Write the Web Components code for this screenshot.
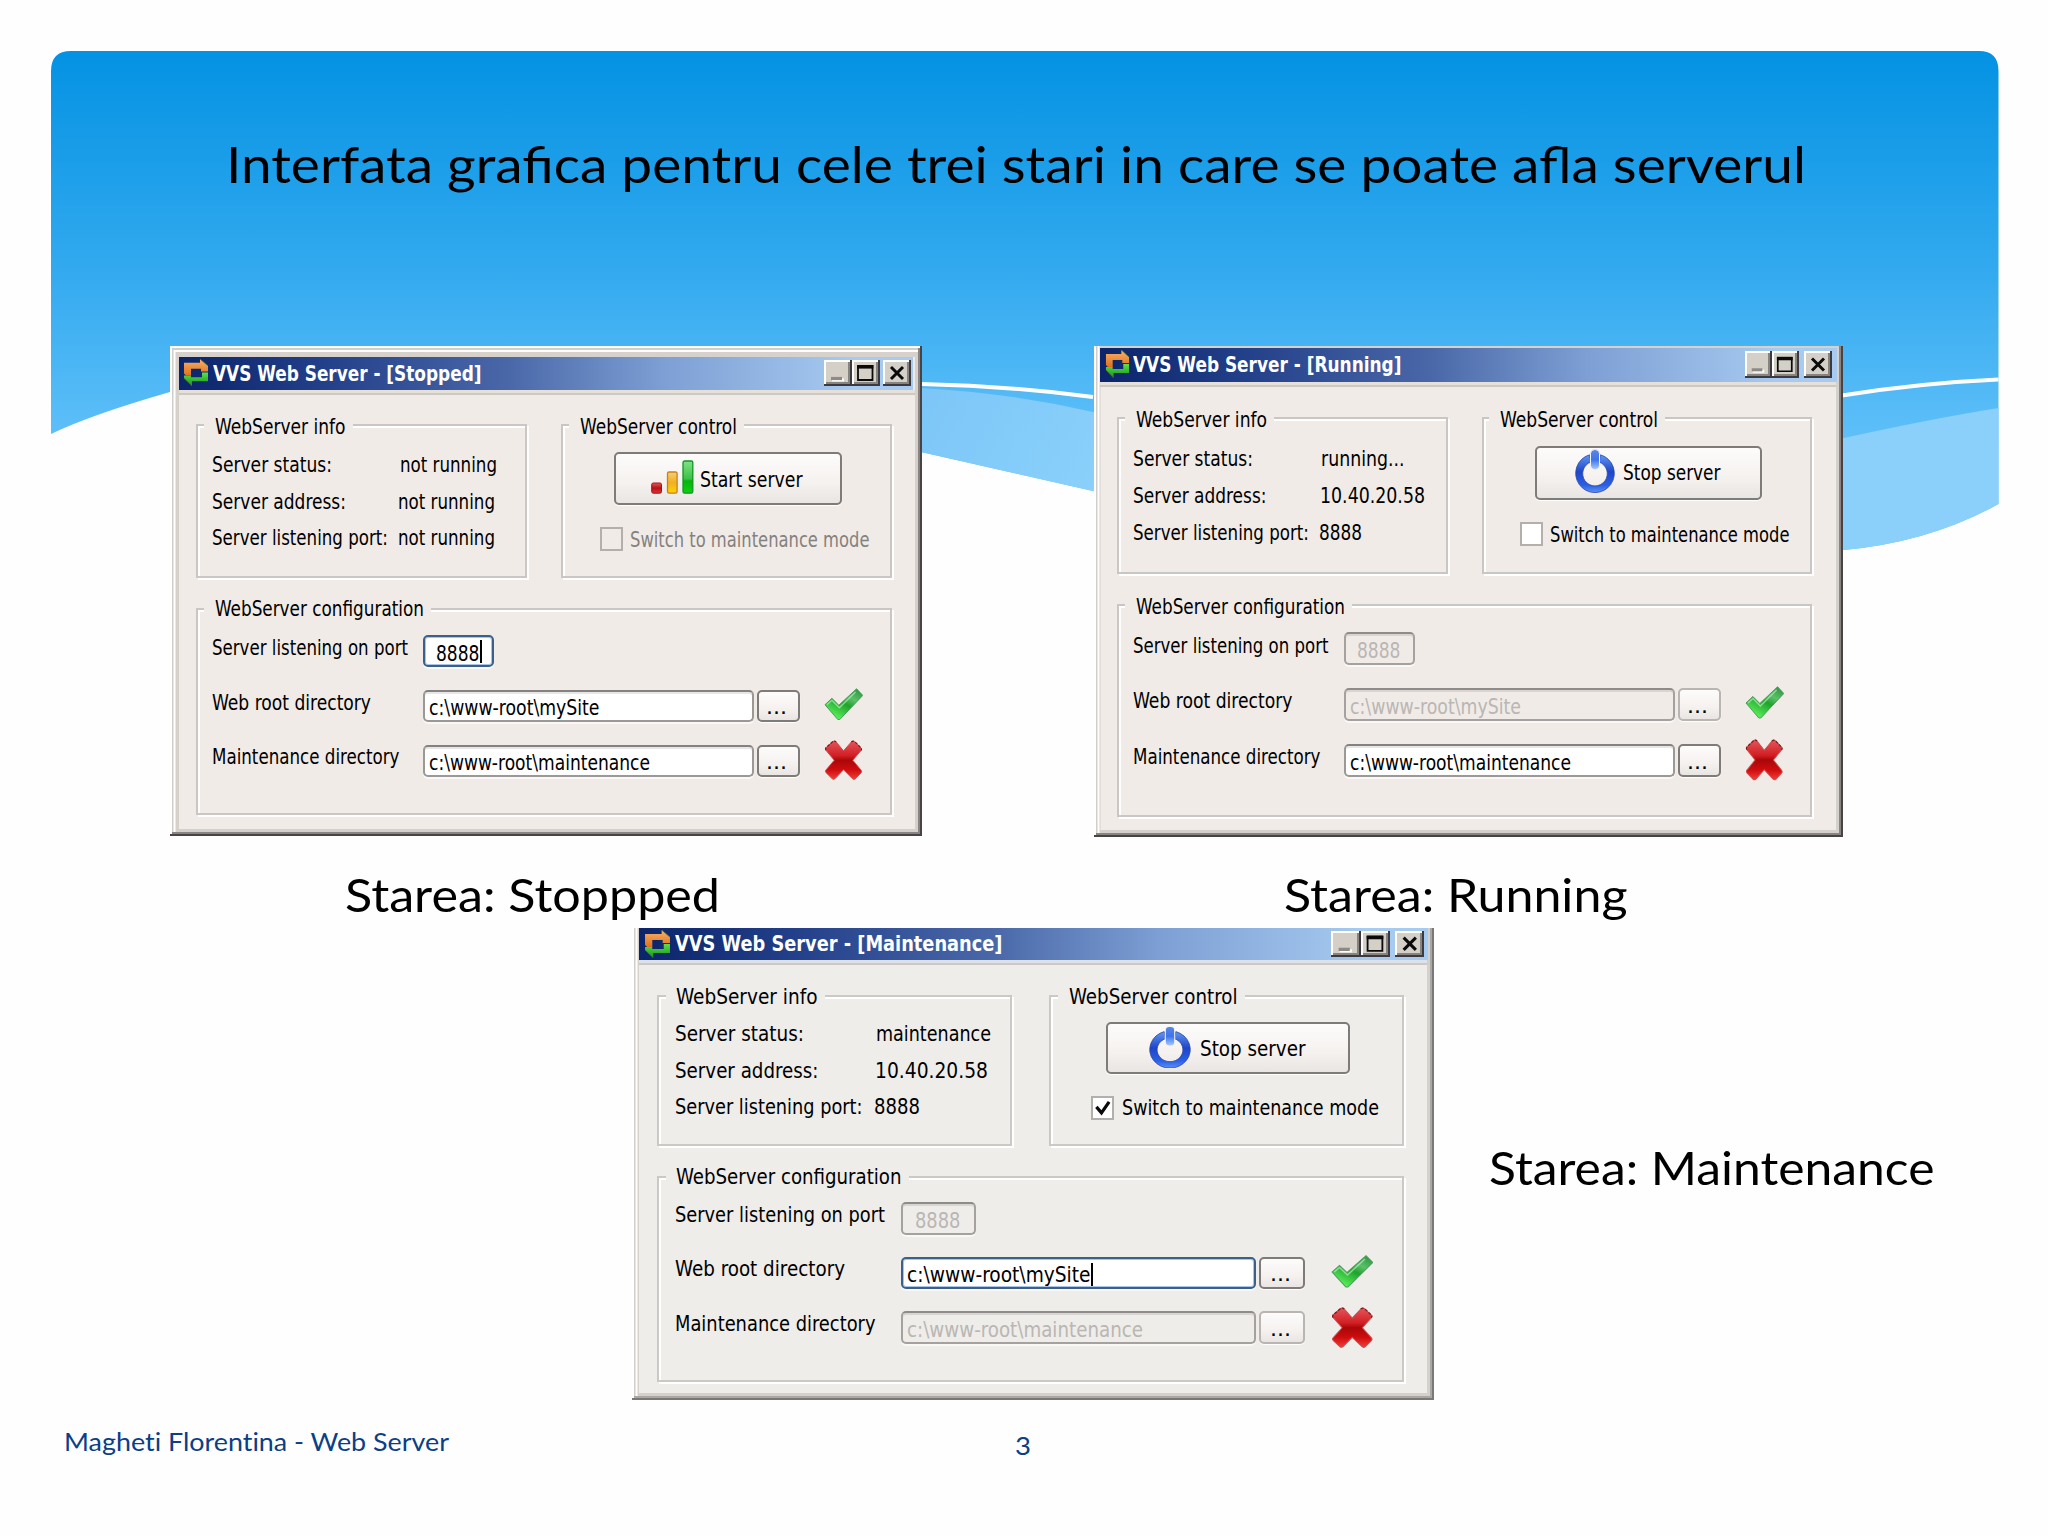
<!DOCTYPE html>
<html lang="ro">
<head>
<meta charset="utf-8">
<title>VVS Web Server</title>
<style>
html,body{margin:0;padding:0;background:#fefefe}
body{width:2048px;height:1536px;overflow:hidden}
</style>
</head>
<body>
<slide-page></slide-page>
<script>
const define = (name, cls) => customElements.define(name, cls);

// Text stretched horizontally to a set width.
define('fit-text', class extends HTMLElement {
  connectedCallback() {
    const w = parseFloat(this.getAttribute('w'));
    const r = this.shadowRoot || this.attachShadow({ mode: 'open' });
    r.innerHTML = `<style>:host{display:block;flex:none;width:${w}px;white-space:pre}
      span{display:inline-block;transform-origin:0 50%}</style><span><slot></slot></span>`;
    const s = r.querySelector('span');
    const n = s.getBoundingClientRect().width;
    if (n) s.style.transform = `scaleX(${(w + 2) / n})`;
    s.style.marginLeft = '-1.5px';
  }
});

const ICONS = {
  sync: `<svg viewBox="0 0 26 28" preserveAspectRatio="none"><defs><linearGradient id="o" x2="0" y2="1"><stop stop-color="#f7b26a"/><stop offset="1" stop-color="#e0701a"/></linearGradient><linearGradient id="g" x2="0" y2="1"><stop stop-color="#5fe04a"/><stop offset="1" stop-color="#12901c"/></linearGradient></defs>
    <path d="M1 4H17V0L25 7V13H18V10H8V17H3L1 15Z" fill="url(#o)"/><path d="M25 14V23H9V28L1 20V17H8V19H19V14Z" fill="url(#g)"/><path d="M17 0L25 7M9 28L1 20" stroke="#4b6a2a" stroke-width=".8"/></svg>`,
  bars: `<svg viewBox="0 0 43 34"><defs><linearGradient id="r" x2="0" y2="1"><stop stop-color="#e05a5a"/><stop offset=".5" stop-color="#b80f14"/><stop offset="1" stop-color="#d63a3a"/></linearGradient><linearGradient id="y" x2="0" y2="1"><stop stop-color="#f6cf73"/><stop offset=".5" stop-color="#f0b021"/><stop offset="1" stop-color="#ffd400"/></linearGradient><linearGradient id="g" x2="0" y2="1"><stop stop-color="#7fe486"/><stop offset=".55" stop-color="#3cc244"/><stop offset=".62" stop-color="#06b40c"/><stop offset="1" stop-color="#0bd20f"/></linearGradient></defs>
    <rect x=".7" y="23" width="9.8" height="10.2" rx="1.6" fill="url(#r)" stroke="#a51215"/><rect x="16.5" y="12" width="9.6" height="21.2" rx="1.6" fill="url(#y)" stroke="#c8801c" stroke-width="1.3"/><rect x="32" y="1" width="9.8" height="32.2" rx="1.6" fill="url(#g)" stroke="#169426" stroke-width="1.3"/></svg>`,
  power: `<svg viewBox="0 0 40 44" preserveAspectRatio="none"><defs><linearGradient id="p" x2="0" y2="1"><stop stop-color="#5f97f5"/><stop offset=".45" stop-color="#1f46c8"/><stop offset=".8" stop-color="#2a5fe6"/><stop offset="1" stop-color="#5a92f8"/></linearGradient><linearGradient id="q" x2="0" y2="1"><stop stop-color="#5b86e8"/><stop offset=".5" stop-color="#3f73ea"/><stop offset="1" stop-color="#a8cdfb"/></linearGradient></defs>
    <path d="M14.500 5.800A19.300 19.300 0 1 0 25.500 5.800L24 13A12.300 12.300 0 1 1 16 13Z" fill="url(#p)" stroke="#2a46a0" stroke-width=".8"/><rect x="15.500" y=".6" width="9" height="20" rx="4" fill="url(#q)" stroke="#f5f3f8" stroke-width="1"/></svg>`,
  check: `<svg viewBox="0 0 40 33" preserveAspectRatio="none"><defs><linearGradient id="c" x1="1" x2=".3" y2="1"><stop stop-color="#1f8f35"/><stop offset=".35" stop-color="#5cc06a"/><stop offset=".55" stop-color="#1fa32c"/><stop offset="1" stop-color="#5df55c"/></linearGradient></defs>
    <path d="M1 17L8 10.500L15 17.500L33 .8L39.300 7.500L16 32H14Z" fill="url(#c)" stroke="#4d9a5d" stroke-width="1"/><path d="M3 17L8 12.500L15.500 20L32 4" fill="none" stroke="#b5ecb6" stroke-width="1.400" opacity=".7"/></svg>`,
  cross: `<svg viewBox="0 0 40 41" preserveAspectRatio="none"><defs><linearGradient id="x" x2="0" y2="1"><stop stop-color="#e2555a"/><stop offset=".38" stop-color="#d21f24"/><stop offset=".5" stop-color="#a90709"/><stop offset=".75" stop-color="#cf0c0e"/><stop offset="1" stop-color="#f0403c"/></linearGradient></defs>
    <path d="M9 1.500Q11 .5 12.500 2L20 11L28 2Q29.500 .6 31.500 1.600L38 8Q39 9.200 38 10.600L29.500 20.500L38 30.500Q39.200 32 38 33.300L32 39.400Q30.500 40.500 29 39L20 30L11.500 39Q10 40.500 8.500 39.300L2 33Q1 31.600 2 30.400L10.500 20.500L2 10.400Q1 9 2 7.800Z" fill="url(#x)" stroke="#d0484a" stroke-width="1"/><path d="M2 10.400Q1 9 2 7.800L9 1.500Q11 .5 12.500 2M28 2Q29.500 .6 31.500 1.600L38 8Q39 9.200 38 10.600" fill="none" stroke="#7d1a1e" stroke-width="1.200" stroke-dasharray="3 1.500"/></svg>`,
  min: `<svg viewBox="0 0 28 25"><path d="M8 19.500h12" stroke="#fff" stroke-width="3"/><path d="M7 18h11" stroke="#8d8a86" stroke-width="3.200"/></svg>`,
  max: `<svg viewBox="0 0 28 25"><path d="M6 5.500h14.500V19.500H6Z" fill="none" stroke="#0a0a0a" stroke-width="1.800"/><path d="M5.100 6.300h16.300" stroke="#0a0a0a" stroke-width="3.600"/></svg>`,
  close: `<svg viewBox="0 0 28 25"><path d="M8 6.500L20 18.500M20 6.500L8 18.500" stroke="#0a0a0a" stroke-width="3"/></svg>`,
  tick: `<svg viewBox="0 0 23 23"><path d="M4 10.500L10 17.500L19 4.500" fill="none" stroke="#0a0a0a" stroke-width="3.800"/></svg>`
};

define('ui-icon', class extends HTMLElement {
  connectedCallback() {
    const r = this.attachShadow({ mode: 'open' });
    r.innerHTML = `<style>:host{display:block;width:100%;height:100%}svg{display:block;width:100%;height:100%}</style>${ICONS[this.getAttribute('name')]}`;
  }
});

define('caption-button', class extends HTMLElement {
  connectedCallback() {
    const r = this.attachShadow({ mode: 'open' });
    r.innerHTML = `<style>:host{display:block;width:100%;height:100%;background:#d4d0c8;
      box-shadow:inset -2px -2px #3c3a3e,inset 2px 2px #fff,inset -4px -4px #87837f}</style><ui-icon name="${this.getAttribute('kind')}"></ui-icon>`;
  }
});

// Etched frame; the legend sits across its top edge.
define('group-box', class extends HTMLElement {
  connectedCallback() {
    const r = this.attachShadow({ mode: 'open' });
    r.innerHTML = `<style>:host{display:block;box-sizing:border-box;width:100%;height:100%;border:2px solid var(--etch,#cbc6c3);
      box-shadow:2px 2px #fff,inset 2px 2px #fff}
      .in{display:flow-root;margin:-2px}</style><div class="in"><slot></slot></div>`;
  }
});

define('text-field', class extends HTMLElement {
  connectedCallback() {
    const s = this.getAttribute('state') || '';
    const c = s === 'focus' ? ['#3c608a', '#3c608a', '#fff', '#000'] : s === 'off' ? ['#8f8b89', '#a5a19f', 'transparent', '#bab6b3'] : ['#858180', '#9c9896', '#fff', '#000'];
    const r = this.attachShadow({ mode: 'open' });
    r.innerHTML = `<style>:host{display:flex;box-sizing:border-box;width:100%;height:100%;border:2px solid ${c[1]};border-top-color:${c[0]};
      border-radius:5px;background:${c[2]};color:${c[3]};box-shadow:0 2px #faf8f6${s === 'focus' ? ',inset 0 0 0 1px #a9c4e4' : ',inset 0 2px #00000018'}}
      i{display:${s === 'focus' ? 'block' : 'none'};flex:none;width:2px;height:23px;background:#000;margin:${this.getAttribute('caret') || 4}px 0 0 1px}</style><slot></slot><i></i>`;
  }
});

define('push-button', class extends HTMLElement {
  connectedCallback() {
    const off = this.hasAttribute('off');
    const r = this.attachShadow({ mode: 'open' });
    r.innerHTML = `<style>:host{display:flex;box-sizing:border-box;width:100%;height:100%;border:2px solid ${off ? '#b9b5b2' : '#7f7b79'};border-radius:5px;
      background:linear-gradient(#fdfcfb,#f5f1ef 60%,#e9e5e2);box-shadow:0 1px 1px #fff}</style><slot></slot>`;
  }
});

define('check-box', class extends HTMLElement {
  connectedCallback() {
    const s = this.getAttribute('state');
    const r = this.attachShadow({ mode: 'open' });
    r.innerHTML = `<style>:host{display:block;box-sizing:border-box;width:100%;height:100%;border:2px solid #b3afac;background:${s === 'off' ? 'transparent' : '#fff'}}</style>${s === 'on' ? '<ui-icon name="tick"></ui-icon>' : ''}`;
  }
});

// Cells are [x, y, width, height, markup]; rows become flex lines spaced by margins.
function flow(x0, y0, rows) {
  let bottom = y0;
  return rows.map(cells => {
    const top = Math.min(...cells.map(c => c[1])), end = Math.max(...cells.map(c => c[1] + c[3]));
    let right = x0;
    const h = cells.map(c => {
      const s = `<div style="flex:none;margin:${c[1] - top}px 0 0 ${c[0] - right}px;width:${c[2]}px;height:${c[3]}px">${c[4]}</div>`;
      right = c[0] + c[2];
      return s;
    }).join('');
    const s = `<div style="display:flex;align-items:flex-start;height:${end - top}px;padding-top:${Math.max(0, top - bottom)}px;margin-top:${Math.min(0, top - bottom)}px">${h}</div>`;
    bottom = end;
    return s;
  }).join('');
}
const text = (x, x2, base, s, style = '') => [x, base - 19, x2 - x, 24, `<fit-text w="${x2 - x}" style="${style}">${s}</fit-text>`];
const legend = (x, x2, base, s) => [x - 12, base - 19, x2 - x + 20, 24, `<div class="legend"><fit-text w="${x2 - x}">${s}</fit-text></div>`];
const field = (x, x2, y, y2, state, tx, tx2, base, s, caret) => [x, y, x2 - x, y2 - y,
  `<text-field state="${state}" caret="${caret || 4}"><fit-text w="${tx2 - tx}" style="margin:${base - 21 - y}px 0 0 ${tx - x - 2}px">${s}</fit-text></text-field>`];
const dots = (x, x2, y, y2, off) => [x, y, x2 - x, y2 - y,
  `<push-button ${off ? 'off' : ''}><fit-text w="19" style="margin:${y2 - y - 29}px 0 0 ${(x2 - x) / 2 - 12.5}px">...</fit-text></push-button>`];
const icon = (x, x2, y, y2, n) => [x, y, x2 - x, y2 - y, `<ui-icon name="${n}"></ui-icon>`];

const WINDOWS = {
  stopped: {
    box: [170, 921.5, 346, 835.5], t: 1, bar: [179, 913, 357, 390], icon: [183, 209, 359, 386], title: [214, 480.5, 380.7, 'VVS Web Server - [Stopped]'],
    cap: [360, 386, 824, 852, 883, 911],
    g1: [196, 527, 424, 578], l1: [216, 344.500, 434], g2: [561, 892, 424, 578], l2: [581, 736, 434],
    info: [213, [331, 345, 387], [472, 508.5, 545], [[401, 496], [399.5, 494.5], [399.5, 494.5]], ['not running', 'not running', 'not running']],
    btn: [614, 841.5, 452, 505], bi: [651, 694, 460, 494, 'bars'], bt: [701.5, 802, 487, 'Start server'],
    cb: [600, 622.5, 527, 550.5, 'off'], ct: [631, 868.5, 546.5],
    g3: [196, 892, 607.5, 815], l3: [216, 423, 616],
    lab: [213, [407, 370, 398.5], [655, 709.5, 764]],
    f: [[423, 494, 635, 667, 'focus', 437.5, 479, 660.5, '8888', 3], [423, 754, 689.5, 721.500, '', 430, 598.500, 715, 'c:\\www-root\\mySite'], [423, 754, 744.500, 776.500, '', 430, 649, 770, 'c:\\www-root\\maintenance']],
    d: [757, 799.500, 0, 0], ic: [[823.500, 863, 687.500, 720], [824, 863, 740, 780.500]]
  },
  running: {
    box: [1093.5, 1842.5, 346, 837], t: 0, bar: [1100, 1837, 348, 381.5], icon: [1105, 1130, 350, 378], title: [1134.5, 1401, 371.5, 'VVS Web Server - [Running]'],
    cap: [351, 378, 1745, 1772, 1804, 1832],
    g1: [1117, 1448, 417, 574], l1: [1137, 1266, 427], g2: [1482, 1812, 417, 574], l2: [1501, 1657, 427],
    info: [1134.5, [1252.5, 1266, 1308.5], [465.5, 502.5, 540], [[1322, 1403.5], [1321, 1424], [1320, 1361]], ['running...', '10.40.20.58', '8888']],
    btn: [1534.5, 1762, 445.5, 499.5], bi: [1575, 1615, 449, 493, 'power'], bt: [1624.5, 1720, 480, 'Stop server'],
    cb: [1520, 1543, 521.5, 546, ''], ct: [1551.5, 1789, 541.5],
    g3: [1117, 1812, 604, 817], l3: [1137, 1344, 613.5],
    lab: [1134.5, [1328, 1292, 1320], [652.5, 708, 764]],
    f: [[1344, 1414.5, 632, 665, 'off', 1358.5, 1400, 658, '8888'], [1344, 1675, 688, 721, 'off', 1351, 1520, 713.5, 'c:\\www-root\\mySite'], [1344, 1675, 744, 777, '', 1351, 1570, 770, 'c:\\www-root\\maintenance']],
    d: [1678, 1720.5, 1, 0], ic: [[1744.500, 1784, 686, 719], [1744.500, 1783, 739, 781]]
  },
  maintenance: {
    box: [632, 1434, 927.5, 1399.5], t: 0, cool: 1, bar: [639, 1428, 927.5, 960], icon: [643.5, 670.5, 930, 958], title: [676, 1001.5, 951, 'VVS Web Server - [Maintenance]'],
    cap: [931, 956.5, 1331, 1360.5, 1394.5, 1424],
    g1: [657, 1012, 994.5, 1146], l1: [677.5, 817, 1003.5], g2: [1049, 1403.5, 994.5, 1146], l2: [1070, 1236.5, 1003.5],
    info: [676, [803, 817.5, 861.5], [1041, 1077.5, 1114], [[877, 990], [876, 987], [875, 919]], ['maintenance', '10.40.20.58', '8888']],
    btn: [1105.5, 1349.5, 1022, 1074], bi: [1149, 1191, 1025.5, 1068, 'power'], bt: [1201.5, 1305, 1055.5, 'Stop server'],
    cb: [1090.5, 1114, 1096, 1119.5, 'on'], ct: [1123.5, 1378.5, 1115],
    g3: [657, 1403.5, 1175.5, 1381.5], l3: [677.5, 901, 1184],
    lab: [676, [884, 844, 874.5], [1222, 1276, 1331]],
    f: [[901, 976, 1202, 1235, 'off', 916.5, 960, 1228, '8888'], [901, 1256, 1256.5, 1289, 'focus', 908.5, 1090, 1282, 'c:\\www-root\\mySite', 4], [901, 1256, 1311, 1343.5, 'off', 908.5, 1142.5, 1337, 'c:\\www-root\\maintenance']],
    d: [1259, 1304.5, 0, 1], ic: [[1330.5, 1373, 1255, 1288], [1330.5, 1373, 1307, 1348.5]]
  }
};

define('server-window', class extends HTMLElement {
  connectedCallback() {
    const w = WINDOWS[this.getAttribute('state')];
    const [L, R, T, B] = w.box, W = R - L, t = w.t;
    const bar = w.bar, X = bar[0], c = w.cap;
    const titleCells = flow(X, bar[2], [[
      icon(...w.icon, 'sync'), text(...w.title, 'font-weight:bold;color:#fff'),
      ...[['min', c[2], c[3]], ['max', c[3], 2 * c[3] - c[2]], ['close', c[4], c[5]]].map(k => [k[1], c[0], k[2] - k[1], c[1] - c[0], `<caption-button kind="${k[0]}"></caption-button>`])
    ]]);
    const group = (g, l, name, rows) => [g[0], g[2], g[1] - g[0], g[3] - g[2],
      `<group-box>${flow(g[0], g[2], [[legend(...l, name)], ...rows])}</group-box>`];
    const inf = w.info, names = ['Server status:', 'Server address:', 'Server listening port:'];
    const g1 = group(w.g1, w.l1, 'WebServer info', names.map((n, i) => [text(inf[0], inf[1][i], inf[2][i], n), text(...inf[3][i], inf[2][i], inf[4][i])]));
    const b = w.btn;
    const g2 = group(w.g2, w.l2, 'WebServer control', [
      [[b[0], b[2], b[1] - b[0], b[3] - b[2], `<push-button><div>${flow(b[0] + 2, b[2] + 2, [[icon(...w.bi), text(...w.bt)]])}</div></push-button>`]],
      [[w.cb[0], w.cb[2], w.cb[1] - w.cb[0], w.cb[3] - w.cb[2], `<check-box state="${w.cb[4]}"></check-box>`], text(...w.ct, 'Switch to maintenance mode', w.cb[4] === 'off' ? 'color:#85817e' : '')]
    ]);
    const labs = ['Server listening on port', 'Web root directory', 'Maintenance directory'];
    const g3 = group(w.g3, w.l3, 'WebServer configuration', labs.map((n, i) => {
      const row = [text(w.lab[0], w.lab[1][i], w.lab[2][i], n), field(...w.f[i])];
      if (i) row.push(dots(w.d[0], w.d[1], w.f[i][2], w.f[i][3], w.d[i + 1]), icon(...w.ic[i - 1], i === 1 ? 'check' : 'cross'));
      return row;
    }));
    const bg = w.cool ? '#eeedea' : '#f0ebe7', bb = bar[3];
    const r = this.attachShadow({ mode: 'open' });
    r.innerHTML = `<style>
      :host{display:block;position:absolute;left:${L}px;top:${T}px;width:${W}px;height:${B - T}px;--etch:${w.cool ? '#cac9c6' : '#cbc6c3'};
        font:20.6px/24px "DejaVu Sans Condensed","DejaVu Sans",sans-serif;color:#000;
        background:${bg};
        box-shadow:inset -2px -2px ${w.cool ? '#7b7977' : '#484445'},inset 2px ${2 * t}px #fff,inset -4px -4px ${w.cool ? '#aaa8a5' : '#898482'},inset 3.500px ${4 * t}px #d2cec9,inset 5.500px ${6 * t}px #fff,inset -7px -7px #d4d0cb,inset ${X - L}px ${bar[2] - T}px #d6d1cb}
      .bar{margin-left:${X - L}px;width:${bar[1] - X}px;height:${bb - bar[2]}px;background:linear-gradient(90deg,#0b246a,#23408a 20%,#4a68a8 45%,#7d9fd4 66%,#a6caf0 92%)}
      .sep{margin:0 7px 0 ${X - L}px;height:3px;background:${w.cool ? '#dde2ea' : '#e6e0d8'};border-bottom:2px solid #ccc8c4}
      .legend{padding-left:12px;background:${bg};height:24px}
      .body{height:0}
    </style><div style="height:${bar[2] - T}px"></div><div class="bar">${titleCells}</div><div class="sep"></div>
    <div class="body">${flow(L, bb + 5, [[g1, g2], [g3]])}</div>`;
  }
});

define('slide-page', class extends HTMLElement {
  connectedCallback() {
    const r = this.attachShadow({ mode: 'open' });
    const cap = (x, x2, base, size, s) => `<fit-text w="${x2 - x}" style="position:absolute;left:${x}px;top:${base - size * .987}px;font-size:${size}px;line-height:1.2">${s}</fit-text>`;
    r.innerHTML = `<style>
      :host{display:block;position:relative;width:2048px;height:1536px;background:#fefefe;font-family:Lato,sans-serif;color:#000}
      .wave{display:block;position:absolute;left:0;top:0}
      h1{margin:0;padding:133.600px 0 0 227px;font-weight:400;font-size:50px;line-height:60px;position:relative}
      footer{position:absolute;left:65px;top:1426px;display:flex;gap:568px;color:#0b3f86;font-size:25px;line-height:31px;font-variant-ligatures:none}
    </style>
    <svg class="wave" width="2048" height="620"><defs><linearGradient id="sky" gradientUnits="userSpaceOnUse" x1="0" y1="51" x2="0" y2="460"><stop stop-color="#0492e3"/><stop offset=".5" stop-color="#2fa8ee"/><stop offset="1" stop-color="#64c2fa"/></linearGradient>
      <linearGradient id="band" gradientUnits="userSpaceOnUse" x1="921" y1="390" x2="1093" y2="490"><stop stop-color="#7cc6f7"/><stop offset="1" stop-color="#8ad0fb"/></linearGradient></defs>
      <path d="M51 434V71Q51 51 71 51H1979Q1998.500 51 1998.500 71V504Q1930 542 1844 550C1600 570 1350 560 1093 491L921 452C700 390 600 360 400 360Q270 360 170 392Q90 415 51 434Z" fill="url(#sky)"/>
      <path d="M921 388Q1010 393 1093 412C1350 465 1600 490 1844 438Q1930 419 1998.500 408V504Q1930 542 1844 550C1600 570 1350 560 1093 491L921 452Z" fill="url(#band)"/>
      <path d="M921 384Q1010 386 1093 397M1842 395.500Q1920 383 1998.500 379.500" fill="none" stroke="#fff" stroke-width="4"/></svg>
    <h1><fit-text w="1578">Interfata grafica pentru cele trei stari in care se poate afla serverul</fit-text></h1>
    ${cap(346, 719, 912.5, 47, 'Starea: Stoppped')}
    ${cap(1285, 1626.500, 912.5, 47, 'Starea: Running')}
    ${cap(1490.500, 1934, 1185.5, 47, 'Starea: Maintenance')}
    <server-window state="stopped"></server-window>
    <server-window state="running"></server-window>
    <server-window state="maintenance"></server-window>
    <footer><fit-text w="383">Magheti Florentina - Web Server</fit-text><fit-text w="14" style="margin-top:4px">3</fit-text></footer>`;
  }
});
</script>
</body>
</html>
